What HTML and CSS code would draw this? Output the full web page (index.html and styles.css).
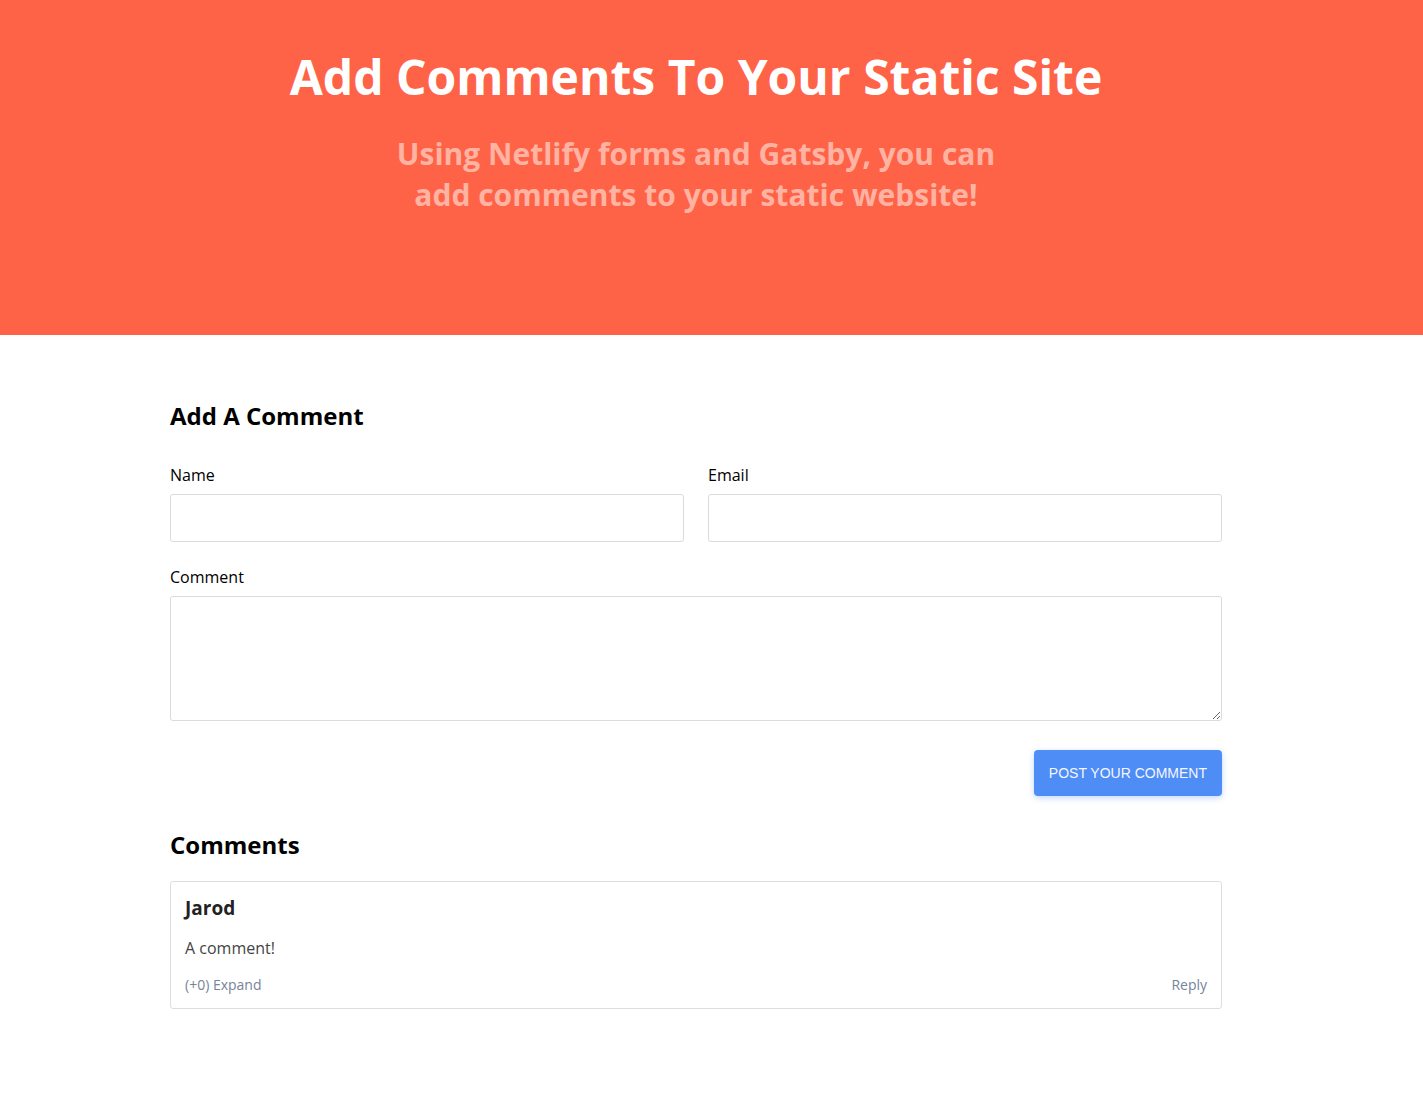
FILE: index.html
```html
<!DOCTYPE html>
<html lang="en">
<head>
  <meta charset="UTF-8">
  <meta name="viewport" content="width=device-width, initial-scale=1.0">
  <title>Add Comments To Your Static Site</title>
  <link rel="stylesheet" href="styles.css">
</head>
<body>
  <header class="hero">
    <h1>Add Comments To Your Static Site</h1>
    <p class="subtitle">Using Netlify forms and Gatsby, you can<br>add comments to your static website!</p>
  </header>

  <main class="page">
    <div class="container">
      <h2>Add A Comment</h2>
      <form name="comments" class="comment-form">
        <div class="form-row">
          <div class="field">
            <label for="name">Name</label>
            <input type="text" id="name" name="name">
          </div>
          <div class="field">
            <label for="email">Email</label>
            <input type="email" id="email" name="email">
          </div>
        </div>
        <div class="field">
          <label for="comment">Comment</label>
          <textarea id="comment" name="comment"></textarea>
        </div>
        <div class="form-actions">
          <button type="submit">Post Your Comment</button>
        </div>
      </form>

      <h2 class="comments-title">Comments</h2>
      <div class="comment">
        <h3>Jarod</h3>
        <p>A comment!</p>
        <div class="comment-footer">
          <span>(+0) Expand</span>
          <span>Reply</span>
        </div>
      </div>
    </div>
  </main>
</body>
</html>
```

FILE: styles.css
```css
body {
  margin: 0;
  font-family: "Open Sans", sans-serif;
  color: #000;
  background: #fff;
}
.hero {
  background-color: #ff6347;
  height: 335px;
  box-sizing: border-box;
  padding: 44px 31px 0 0;
  text-align: center;
}
.hero h1 {
  margin: 0;
  color: #fff;
  font-size: 48px;
  font-weight: 700;
  line-height: 66px;
}
.subtitle {
  margin: 23px 0 0;
  color: #ffb3a3;
  font-size: 30px;
  font-weight: 700;
  line-height: 41px;
}
.page {
  padding: 0 31px 60px 0;
}
.container {
  max-width: 1052px;
  margin: 0 auto;
  padding-top: 65px;
}
h2 {
  margin: 0;
  font-size: 24px;
  font-weight: 700;
  line-height: 32px;
}
.comment-form {
  margin-top: 32px;
}
.form-row {
  display: grid;
  grid-template-columns: 1fr 1fr;
  gap: 24px;
}
.field {
  margin-bottom: 24px;
}
.field label {
  display: block;
  font-size: 16px;
  line-height: 22px;
  margin-bottom: 8px;
}
.field input,
.field textarea {
  display: block;
  width: 100%;
  box-sizing: border-box;
  border: 1px solid #dbdbdb;
  border-radius: 3px;
  font-family: inherit;
  font-size: 16px;
  padding: 10px 12px;
}
.field input {
  height: 48px;
}
.field textarea {
  height: 125px;
}
.form-actions {
  display: flex;
  justify-content: flex-end;
  margin-top: 29px;
}
button {
  background-color: #4e8cf6;
  color: #f4f7ff;
  border: none;
  border-radius: 4px;
  height: 46px;
  padding: 0 15px;
  font-family: "Liberation Sans", Arial, sans-serif;
  font-size: 14px;
  text-transform: uppercase;
  box-shadow: 0 2px 6px rgba(78, 140, 246, 0.35);
  cursor: pointer;
}
.comments-title {
  margin-top: 33px;
}
.comment {
  margin-top: 20px;
  border: 1px solid #dedede;
  border-radius: 3px;
  padding: 13px 14px 14px;
}
.comment h3 {
  margin: 0;
  color: #222;
  font-size: 19px;
  font-weight: 700;
  line-height: 26px;
}
.comment p {
  margin: 16px 0 0;
  color: #444;
  font-size: 16px;
  line-height: 22px;
}
.comment-footer {
  display: flex;
  justify-content: space-between;
  margin-top: 17px;
  color: #76849a;
  font-size: 14px;
  line-height: 18px;
}
```
